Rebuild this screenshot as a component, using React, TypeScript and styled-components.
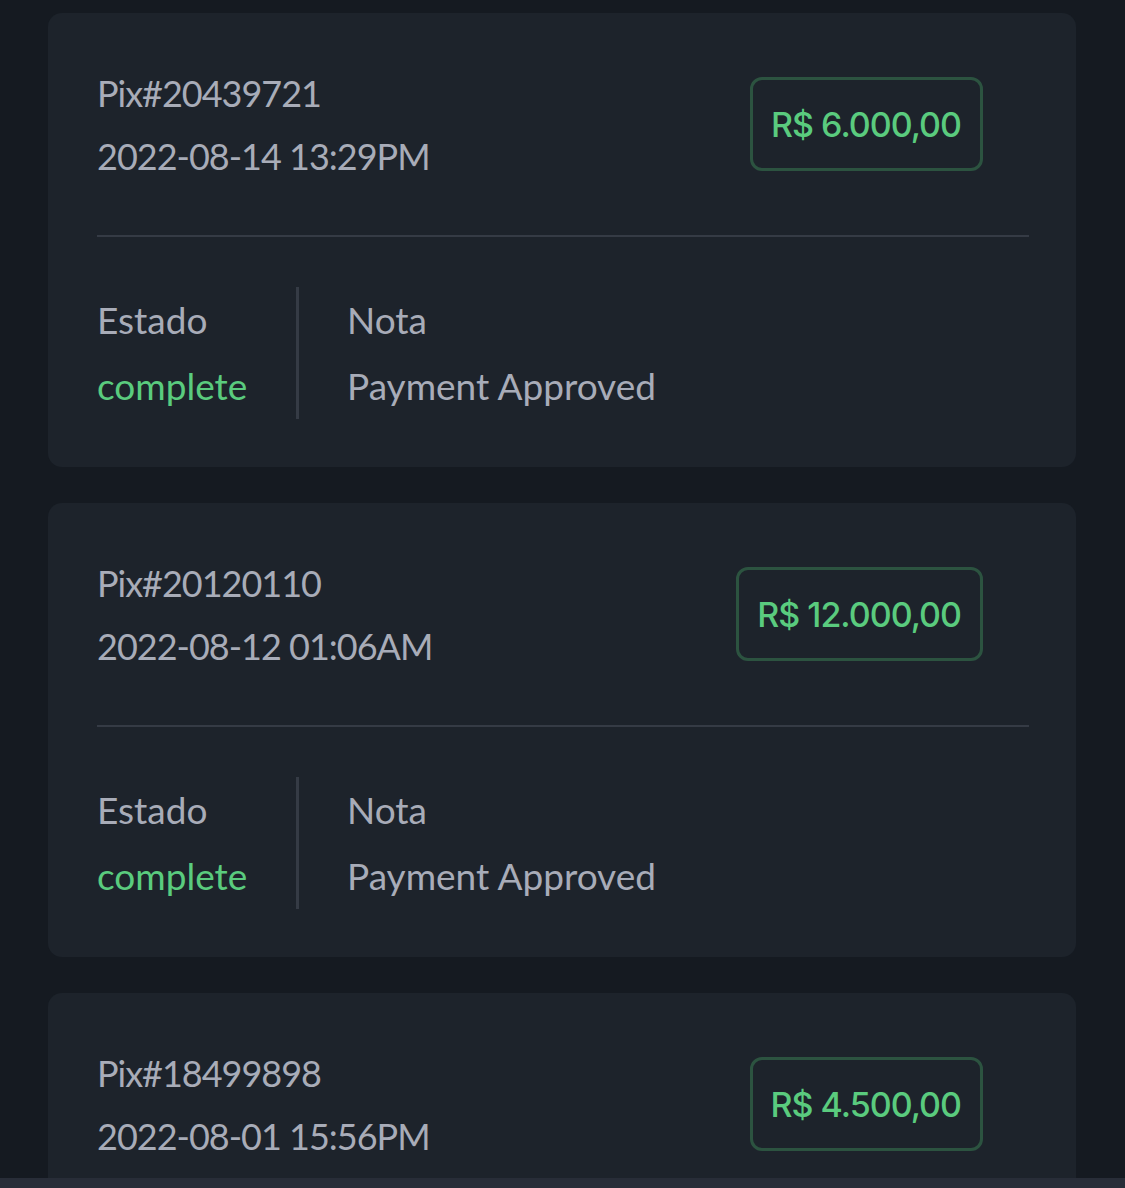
import React from 'react'
import styled, {createGlobalStyle} from 'styled-components'

type Transfer = {
  id: string
  date: string
  amount: string
  status: string
  note: string
}

const transfers: Transfer[] = [
  {id: 'Pix#20439721', date: '2022-08-14 13:29PM', amount: 'R$ 6.000,00', status: 'complete', note: 'Payment Approved'},
  {id: 'Pix#20120110', date: '2022-08-12 01:06AM', amount: 'R$ 12.000,00', status: 'complete', note: 'Payment Approved'},
  {id: 'Pix#18499898', date: '2022-08-01 15:56PM', amount: 'R$ 4.500,00', status: 'complete', note: 'Payment Approved'},
]

const GlobalStyle = createGlobalStyle`
  html, body {
    margin: 0;
    padding: 0;
    background: #151a21;
    height: 1188px;
    overflow: hidden;
  }
  body {
    font-family: Lato, "Noto Sans", sans-serif;
    -webkit-font-smoothing: antialiased;
  }
`

export default function App() {
  return (
    <>
      <GlobalStyle />
      <Page>
        {transfers.map((t) => (
          <Card key={t.id}>
            <Header>
              <Info>
                <Title>{t.id}</Title>
                <Title>{t.date}</Title>
              </Info>
              <Amount>{t.amount}</Amount>
            </Header>
            <Details>
              <Column $divided>
                <Label>Estado</Label>
                <Value $green>{t.status}</Value>
              </Column>
              <Column>
                <Label>Nota</Label>
                <Value>{t.note}</Value>
              </Column>
            </Details>
          </Card>
        ))}
      </Page>
      <BottomEdge />
    </>
  )
}

const Page = styled.div`
  display: flex;
  flex-direction: column;
  gap: 36px;
  padding: 13px 49px 0 48px;
`

const Card = styled.div`
  background: #1d232b;
  border-radius: 14px;
  padding: 0 47px 0 49px;
  flex-shrink: 0;
`

const Header = styled.div`
  display: flex;
  align-items: center;
  justify-content: space-between;
  height: 222px;
  border-bottom: 2px solid #353b45;
`

const Info = styled.div`
  display: flex;
  flex-direction: column;
  padding-top: 2px;
`

const Title = styled.div`
  color: #a8acb8;
  font-size: 36px;
  line-height: 63px;
  letter-spacing: -1px;
`

const Amount = styled.div`
  margin-right: 46px;
  height: 94px;
  box-sizing: border-box;
  padding: 0 19px 0 18px;
  display: flex;
  align-items: center;
  border: 3px solid #2c5340;
  border-radius: 12px;
  color: #5acb7e;
  font-family: Inter, "Noto Sans", sans-serif;
  font-size: 34px;
  letter-spacing: -1px;
  font-weight: 500;
`

const Details = styled.div`
  display: flex;
  padding: 50px 0 48px;
`

const Column = styled.div<{$divided?: boolean}>`
  display: flex;
  flex-direction: column;
  width: ${(p) => (p.$divided ? '199px' : 'auto')};
  padding-left: ${(p) => (p.$divided ? '0' : '48px')};
  border-right: ${(p) => (p.$divided ? '3px solid #353b45' : 'none')};
`

const Label = styled.div`
  color: #a8acb8;
  font-size: 37px;
  line-height: 66px;
`

const Value = styled.div<{$green?: boolean}>`
  color: ${(p) => (p.$green ? '#5acb7e' : '#a8acb8')};
  font-size: 37px;
  line-height: 66px;
`

const BottomEdge = styled.div`
  position: fixed;
  left: 0;
  right: 0;
  bottom: 0;
  height: 10px;
  background: #282d38;
`
